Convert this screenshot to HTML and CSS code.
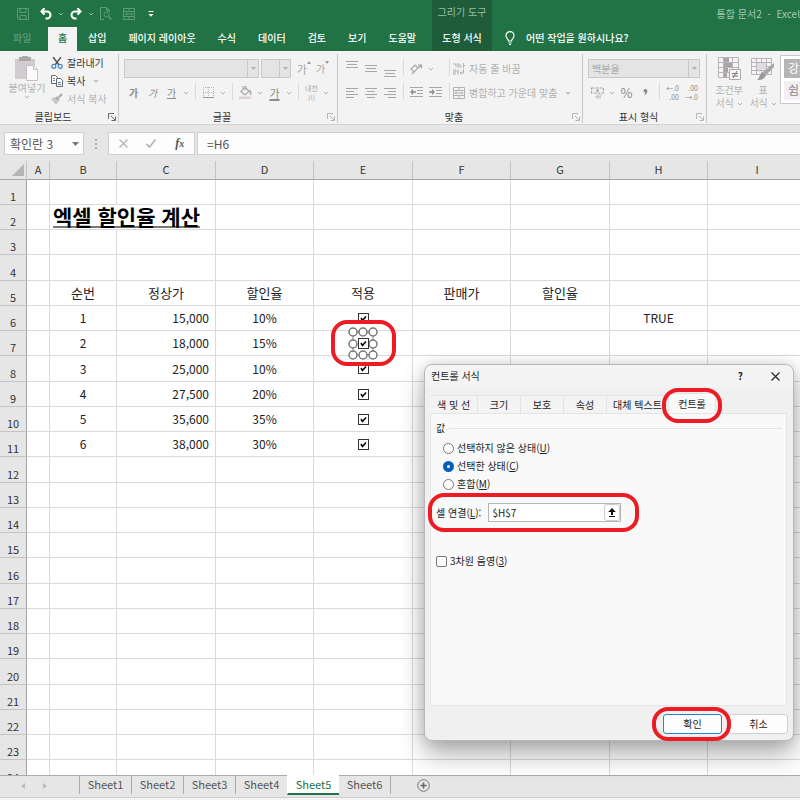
FILE: index.html
```html
<!DOCTYPE html>
<html lang="ko">
<head>
  <meta charset="UTF-8" />
  <meta name="viewport" content="width=device-width, initial-scale=1.0"/>
  <title>통합 문서2 - Excel</title>
  <link rel="stylesheet" href="styles.css">
</head>
<body>

  <svg class="defs" width="0" height="0">
    <symbol id="chev" viewBox="0 0 6 6"><path d="M1 2l2 2 2-2" fill="none" stroke="currentColor"/></symbol>
    <symbol id="launch" viewBox="0 0 8 8"><path d="M.5 6V.5H6M3 3l4 4M7.500 3.500v4h-4" fill="none" stroke="currentColor"/></symbol>
  </svg>

  <header class="top">
    <div class="top-left">
      <div class="qat">
        <button class="dim" aria-label="저장"><svg width="12" height="12" viewBox="0 0 12 12"><path d="M.5.5h11v11H2L.5 10zM3 .5v4h6v-4M3 11.500v-4h6v4" fill="none" stroke="currentColor"/></svg></button>
        <button aria-label="실행 취소"><svg width="12" height="12" viewBox="0 0 12 12"><path d="M4.500 0L1.500 3.500l3 3M1.500 3.500H7a3.400 3.400 0 0 1 0 7H5.500" fill="none" stroke="currentColor" stroke-width="2"/></svg></button>
        <svg class="mini" width="6" height="6"><use href="#chev"/></svg>
        <button aria-label="다시 실행"><svg width="12" height="12" viewBox="0 0 12 12"><path d="M7.500 0l3 3.500-3 3M10.500 3.500H5a3.400 3.400 0 0 0 0 7h1.500" fill="none" stroke="currentColor" stroke-width="2"/></svg></button>
        <svg class="mini" width="6" height="6"><use href="#chev"/></svg>
        <button class="dim" aria-label="인쇄 미리 보기"><svg width="12" height="13" viewBox="0 0 12 13"><path d="M4 12.500H.5V.5h6l3 3V5M6.500.5v3h3" fill="none" stroke="currentColor"/><circle cx="6.500" cy="7.500" r="2.500" fill="none" stroke="currentColor"/><path d="M8.500 9.500l3 3" stroke="currentColor" stroke-width="1.500"/></svg></button>
        <button class="dim" aria-label="표"><svg width="12" height="12" viewBox="0 0 12 12"><path d="M.5.5h11v11H.5zM.5 3.500h11M.5 8.500h11M6 .5v3M6 8.500v3M2.500 6h7M4 4.800L2.500 6 4 7.200M8 4.800L9.500 6 8 7.200" fill="none" stroke="currentColor"/></svg></button>
        <button aria-label="빠른 실행 도구 모음 사용자 지정"><svg width="6" height="6" viewBox="0 0 6 6"><path d="M.5.5h5" stroke="currentColor"/><path d="M.5 3h5L3 5.800z" fill="currentColor"/></svg></button>
      </div>
      <nav class="tabs">
        <a href="#" class="tab file">파일</a>
        <a href="#" class="tab active">홈</a>
        <a href="#" class="tab">삽입</a>
        <a href="#" class="tab">페이지 레이아웃</a>
        <a href="#" class="tab">수식</a>
        <a href="#" class="tab">데이터</a>
        <a href="#" class="tab">검토</a>
        <a href="#" class="tab">보기</a>
        <a href="#" class="tab">도움말</a>
      </nav>
    </div>
    <div class="top-context">
      <span class="context-title">그리기 도구</span>
      <a href="#" class="tab">도형 서식</a>
    </div>
    <div class="top-right">
      <span class="doc-title">통합 문서2&nbsp; -&nbsp; Excel</span>
      <a href="#" class="tell-me"><svg width="10" height="14" viewBox="0 0 10 14"><path d="M3.500 10C3.500 8 1 7.500 1 4.600a4 4 0 0 1 8 0C9 7.500 6.500 8 6.500 10zM3.500 12h3M4 13.500h2" fill="none" stroke="currentColor" stroke-width="1.200"/></svg>어떤 작업을 원하시나요?</a>
    </div>
  </header>

  <section class="ribbon">
    <div class="group clipboard">
      <div class="group-body">
        <button class="big paste">
          <svg width="24" height="25" viewBox="0 0 24 25"><path d="M0 3h20v20H0z" fill="#d2ccd1"/><path d="M4 1h3a3 2 0 0 1 6 0h3v4H4z" fill="#a8a8a8"/><path d="M11.500 9.500h7l4 4v11h-11z" fill="#fafafa" stroke="#c6bfc6"/><path d="M18.500 9.500v4h4" fill="none" stroke="#c6bfc6"/></svg>
          붙여넣기
          <svg width="6" height="6"><use href="#chev"/></svg>
        </button>
        <div class="stack">
          <button class="on"><svg width="12" height="12" viewBox="0 0 12 12"><path d="M2 0l6 8M10 0L4 8" stroke="#555" stroke-width="1.500"/><circle cx="2.800" cy="9.300" r="2" fill="none" stroke="#4a86c5" stroke-width="1.200"/><circle cx="9.200" cy="9.300" r="2" fill="none" stroke="#4a86c5" stroke-width="1.200"/></svg>잘라내기</button>
          <button class="on"><svg width="12" height="12" viewBox="0 0 12 12"><path d="M.5.5h4l2 2v6h-6z" fill="#fff" stroke="#666"/><path d="M5.500 3.500h4l2 2v6h-6z" fill="#fff" stroke="#666"/><path d="M2 3.500h2M2 5.500h2M7 7.500h3M7 9.500h3" stroke="#4a86c5"/></svg>복사<svg class="after" width="6" height="6"><use href="#chev"/></svg></button>
          <button><svg width="12" height="12" viewBox="0 0 12 12"><path d="M0 6l4-2 4 4-3 4z" fill="#c8c8c8"/><path d="M5 4l3 3M7.500 4.500L11 1" stroke="#aaa" stroke-width="2"/></svg>서식 복사</button>
        </div>
      </div>
      <div class="group-label">클립보드<svg class="dark" width="8" height="8"><use href="#launch"/></svg></div>
    </div>

    <div class="group font">
      <div class="rows">
        <div class="row">
          <select class="combo font-name" aria-label="글꼴" disabled><option></option></select>
          <select class="combo font-size" aria-label="글꼴 크기" disabled><option></option></select>
          <button class="tool grow">가<svg width="4" height="3" viewBox="0 0 4 3"><path d="M0 3h4L2 0z" fill="#999"/></svg></button>
          <button class="tool shrink">가<svg width="4" height="3" viewBox="0 0 4 3"><path d="M0 0h4L2 3z" fill="#999"/></svg></button>
        </div>
        <div class="row">
          <button class="tool bold">가</button>
          <button class="tool italic">가</button>
          <button class="tool underline">가</button>
          <button class="drop" aria-label="밑줄"><svg width="6" height="6"><use href="#chev"/></svg></button>
          <i class="sep"></i>
          <button class="tool" aria-label="테두리"><svg width="11" height="11" viewBox="0 0 11 11"><path d="M.5 0v10M5.500 0v10M10.500 0v10M0 .5h11M0 5.500h11" stroke="#c0b4c0" stroke-dasharray="1 1"/><path d="M0 10.500h11" stroke="#999"/></svg></button>
          <button class="drop" aria-label="테두리 옵션"><svg width="6" height="6"><use href="#chev"/></svg></button>
          <i class="sep"></i>
          <button class="tool" aria-label="채우기 색"><svg width="13" height="13" viewBox="0 0 13 13"><path d="M2 5.500L6.500 1.500l3.500 4L6 9zM4 4V1.500a1.500 1.500 0 0 1 3 0V4" fill="none" stroke="#aaa" stroke-width="1.200"/><path d="M10 4c2 1 2 3 1.500 5" fill="none" stroke="#aaa" stroke-width="1.500"/><path d="M0 10.500h12v2.500H0z" fill="#dcd2dc"/></svg></button>
          <button class="drop" aria-label="채우기 옵션"><svg width="6" height="6"><use href="#chev"/></svg></button>
          <button class="tool color">가</button>
          <button class="drop" aria-label="글꼴 색 옵션"><svg width="6" height="6"><use href="#chev"/></svg></button>
          <i class="sep"></i>
          <button class="tool ruby"><span>내천</span><span>川</span></button>
          <button class="drop" aria-label="윗주"><svg width="6" height="6"><use href="#chev"/></svg></button>
        </div>
      </div>
      <div class="group-label">글꼴<svg width="8" height="8"><use href="#launch"/></svg></div>
    </div>

    <div class="group align">
      <div class="align-grid">
        <div class="row">
          <button class="tool high" aria-label="위쪽 맞춤"><svg width="12" height="8" viewBox="0 0 12 8"><path d="M0 .5h12M1 3.500h10M0 6.500h12" stroke="currentColor"/></svg></button>
          <button class="tool" aria-label="가운데 맞춤"><svg width="12" height="8" viewBox="0 0 12 8"><path d="M0 .5h12M1 3.500h10M0 6.500h12" stroke="currentColor"/></svg></button>
          <button class="tool low" aria-label="아래쪽 맞춤"><svg width="12" height="8" viewBox="0 0 12 8"><path d="M0 .5h12M1 3.500h10M0 6.500h12" stroke="currentColor"/></svg></button>
        </div>
        <i class="sep"></i>
        <div class="row">
          <button class="tool" aria-label="방향"><svg width="13" height="13" viewBox="0 0 13 13"><path d="M1 7l4-4 3 3-4 4zM2 12l9-9M8 3h3.500v3.500" fill="none" stroke="currentColor" stroke-width="1.200"/></svg></button>
          <button class="drop" aria-label="방향 옵션"><svg width="6" height="6"><use href="#chev"/></svg></button>
        </div>
        <i class="sep"></i>
        <button class="wide"><svg width="12" height="12" viewBox="0 0 12 12"><path d="M0 1h3v3M5 0v5M5 2.500h1M7 1v3h2M10.500 0v5M10.500 2.500H12M0 7h3v2H0v2h3M5 6.500v5M5 9h1M10.500 6v4H7M8.500 8.500L7 10l1.500 1.500" fill="none" stroke="currentColor"/></svg>자동 줄 바꿈</button>
        <div class="row">
          <button class="tool" aria-label="왼쪽 맞춤"><svg width="12" height="10" viewBox="0 0 12 10"><path d="M0 .5h12M0 3.500h8M0 6.500h12M0 9.500h8" stroke="currentColor"/></svg></button>
          <button class="tool" aria-label="가로 가운데"><svg width="12" height="10" viewBox="0 0 12 10"><path d="M0 .5h12M2 3.500h8M0 6.500h12M2 9.500h8" stroke="currentColor"/></svg></button>
          <button class="tool" aria-label="오른쪽 맞춤"><svg width="12" height="10" viewBox="0 0 12 10"><path d="M0 .5h12M4 3.500h8M0 6.500h12M4 9.500h8" stroke="currentColor"/></svg></button>
        </div>
        <i class="sep"></i>
        <div class="row">
          <button class="tool" aria-label="내어쓰기"><svg width="13" height="11" viewBox="0 0 13 11"><path d="M0 .5h13M7 3.500h6M7 6.500h6M0 9.500h13" stroke="currentColor"/><path d="M6 5H1M3 2.800L1 5l2 2.200" fill="none" stroke="#8a8a8a" stroke-width="1.300"/></svg></button>
          <button class="tool" aria-label="들여쓰기"><svg width="13" height="11" viewBox="0 0 13 11"><path d="M0 .5h13M7 3.500h6M7 6.500h6M0 9.500h13" stroke="currentColor"/><path d="M0 5h5M3 2.800L5 5 3 7.200" fill="none" stroke="#8a8a8a" stroke-width="1.300"/></svg></button>
        </div>
        <i class="sep"></i>
        <button class="wide"><svg width="12" height="12" viewBox="0 0 12 12"><path d="M.5.5h11v11H.5zM.5 3.500h11M.5 8.500h11M6 .5v3M6 8.500v3" fill="none" stroke="currentColor"/><path d="M2 6h8M3.500 4.800L2 6l1.500 1.200M8.500 4.800L10 6 8.500 7.200" fill="none" stroke="#b9a5b5"/></svg>병합하고 가운데 맞춤<svg class="after" width="6" height="6"><use href="#chev"/></svg></button>
      </div>
      <div class="group-label">맞춤<svg width="8" height="8"><use href="#launch"/></svg></div>
    </div>

    <div class="group number">
      <div class="rows">
        <div class="row">
          <select class="combo format" aria-label="표시 형식" disabled><option>백분율</option></select>
        </div>
        <div class="row">
          <button class="tool" aria-label="회계 표시 형식"><svg width="13" height="12" viewBox="0 0 13 12"><path d="M.5 1h12v5H.5z" fill="none" stroke="currentColor" stroke-width="1.200" stroke-dasharray="3 1"/><circle cx="6.500" cy="3.500" r="1.300" fill="#999"/><path d="M5 8h6M4 9.500h6M5 11h5" stroke="#ccc1cc"/></svg></button>
          <button class="drop" aria-label="회계 옵션"><svg width="6" height="6"><use href="#chev"/></svg></button>
          <button class="tool percent">%</button>
          <button class="tool comma" aria-label="쉼표 스타일"><svg width="5" height="7" viewBox="0 0 5 7"><path d="M2.500 0a1.800 1.800 0 0 1 1.800 2C4.300 4 3 6 1 6.500 2 5.500 2.400 4.500 2.300 3.600A1.800 1.800 0 0 1 2.500 0z" fill="#888"/></svg></button>
          <i class="sep"></i>
          <button class="tool decimal"><span>←.0</span><span>.00</span></button>
          <button class="tool decimal"><span>.00</span><span>→.0</span></button>
        </div>
      </div>
      <div class="group-label">표시 형식<svg width="8" height="8"><use href="#launch"/></svg></div>
    </div>

    <div class="group styles">
      <button class="big">
        <svg width="24" height="25" viewBox="0 0 24 25"><path d="M1.500 1.500h20v20h-20zM1.500 6.500h20M1.500 11.500h20M1.500 16.500h20M6.500 1v20M15.500 1v20" fill="none" stroke="#bcb2bc"/><path d="M7 2h5v4H7zM7 7h8v4H7zM7 12h4v4H7zM7 17h3v4H7z" fill="#a6a6a6"/><path d="M12.500 13.500h11v10h-11z" fill="#f8f4f8" stroke="#aaa"/><path d="M15 17.500h6M15 20h6M20 15l-4 7" stroke="#777"/></svg>
        <span>조건부<br>서식 <svg width="6" height="6"><use href="#chev"/></svg></span>
      </button>
      <button class="big">
        <svg width="24" height="25" viewBox="0 0 24 25"><path d="M.5 2.500h20v16H.5zM.5 6.500h20M.5 10.500h20M.5 14.500h20M5.500 2v16M10.500 2v16M15.500 2v16" fill="none" stroke="#bcb2bc"/><path d="M6 7h9v7H6z" fill="#ddd"/><path d="M23 7v4l-8 8-3-3z" fill="#a6a6a6"/><path d="M12 16l3 3c-1 4-5 5-9 5 3-2 2-6 6-8z" fill="#9a9a9a"/></svg>
        <span>표<br>서식 <svg width="6" height="6"><use href="#chev"/></svg></span>
      </button>
      <div class="gallery"><span class="strong">강조색</span><span class="plain">쉼표</span></div>
    </div>
  </section>

  <section class="formula-bar">
    <label class="name-box"><input type="text" value="확인란 3" aria-label="이름 상자"><svg width="7" height="4" viewBox="0 0 7 4"><path d="M0 0h7L3.500 4z" fill="#777"/></svg></label>
    <span class="dots"><svg width="2" height="10" viewBox="0 0 2 10"><path d="M0 0h2v2H0zM0 4h2v2H0zM0 8h2v2H0z" fill="#b0b0b0"/></svg></span>
    <div class="fx-box">
      <button aria-label="취소"><svg width="9" height="9" viewBox="0 0 9 9"><path d="M.5.5l8 8M8.500.5l-8 8" stroke="#b4b4b4" stroke-width="1.400"/></svg></button>
      <button aria-label="입력"><svg width="10" height="9" viewBox="0 0 10 9"><path d="M.5 5l3 3 6-7.500" fill="none" stroke="#b4b4b4" stroke-width="1.600"/></svg></button>
      <button class="fx">f<small>x</small></button>
    </div>
    <input class="formula" type="text" value="=H6" aria-label="수식">
  </section>

  <main class="sheet">
    <table class="grid">
      <colgroup><col class="c-num"><col class="c-a"><col class="c-b"><col class="c-odd"><col class="c-even"><col class="c-odd"><col class="c-even"><col class="c-odd"><col class="c-even"><col class="c-odd"><col></colgroup>
      <thead>
        <tr><th class="corner"><svg width="12" height="12" viewBox="0 0 12 12"><path d="M12 0v12H0z" fill="#b4b4b4"/></svg></th><th>A</th><th>B</th><th>C</th><th>D</th><th>E</th><th>F</th><th>G</th><th>H</th><th>I</th><th></th></tr>
      </thead>
      <tbody>
        <tr><th>1</th><td></td><td></td><td></td><td></td><td></td><td></td><td></td><td></td><td></td><td></td></tr>
        <tr><th>2</th><td></td><td colspan="2" class="title">엑셀 할인율 계산</td><td></td><td></td><td></td><td></td><td></td><td></td><td></td></tr>
        <tr><th>3</th><td></td><td></td><td></td><td></td><td></td><td></td><td></td><td></td><td></td><td></td></tr>
        <tr><th>4</th><td></td><td></td><td></td><td></td><td></td><td></td><td></td><td></td><td></td><td></td></tr>
        <tr class="heads"><th>5</th><td></td><td>순번</td><td>정상가</td><td>할인율</td><td>적용</td><td>판매가</td><td>할인율</td><td></td><td></td><td></td></tr>
        <tr><th>6</th><td></td><td>1</td><td class="price">15,000</td><td>10%</td><td><input type="checkbox" aria-label="적용 1" checked></td><td></td><td></td><td>TRUE</td><td></td><td></td></tr>
        <tr><th>7</th><td></td><td>2</td><td class="price">18,000</td><td>15%</td><td class="selected"><input type="checkbox" aria-label="적용 2" checked>
          <svg class="handles" width="32" height="34" viewBox="0 0 32 34"><path d="M6 5h20v23H6z" fill="none" stroke="#888"/><g fill="#fff" stroke="#777" stroke-width="1.500"><circle cx="6" cy="5" r="4"/><circle cx="16" cy="5" r="4"/><circle cx="26" cy="5" r="4"/><circle cx="6" cy="17" r="4"/><circle cx="26" cy="17" r="4"/><circle cx="6" cy="28" r="4"/><circle cx="16" cy="28" r="4"/><circle cx="26" cy="28" r="4"/></g></svg>
          <span class="ring"></span></td><td></td><td></td><td></td><td></td><td></td></tr>
        <tr><th>8</th><td></td><td>3</td><td class="price">25,000</td><td>10%</td><td><input type="checkbox" aria-label="적용 3" checked></td><td></td><td></td><td></td><td></td><td></td></tr>
        <tr><th>9</th><td></td><td>4</td><td class="price">27,500</td><td>20%</td><td><input type="checkbox" aria-label="적용 4" checked></td><td></td><td></td><td></td><td></td><td></td></tr>
        <tr><th>10</th><td></td><td>5</td><td class="price">35,600</td><td>35%</td><td><input type="checkbox" aria-label="적용 5" checked></td><td></td><td></td><td></td><td></td><td></td></tr>
        <tr><th>11</th><td></td><td>6</td><td class="price">38,000</td><td>30%</td><td><input type="checkbox" aria-label="적용 6" checked></td><td></td><td></td><td></td><td></td><td></td></tr>
        <tr><th>12</th><td></td><td></td><td></td><td></td><td></td><td></td><td></td><td></td><td></td><td></td></tr>
        <tr><th>13</th><td></td><td></td><td></td><td></td><td></td><td></td><td></td><td></td><td></td><td></td></tr>
        <tr><th>14</th><td></td><td></td><td></td><td></td><td></td><td></td><td></td><td></td><td></td><td></td></tr>
        <tr><th>15</th><td></td><td></td><td></td><td></td><td></td><td></td><td></td><td></td><td></td><td></td></tr>
        <tr><th>16</th><td></td><td></td><td></td><td></td><td></td><td></td><td></td><td></td><td></td><td></td></tr>
        <tr><th>17</th><td></td><td></td><td></td><td></td><td></td><td></td><td></td><td></td><td></td><td></td></tr>
        <tr><th>18</th><td></td><td></td><td></td><td></td><td></td><td></td><td></td><td></td><td></td><td></td></tr>
        <tr><th>19</th><td></td><td></td><td></td><td></td><td></td><td></td><td></td><td></td><td></td><td></td></tr>
        <tr><th>20</th><td></td><td></td><td></td><td></td><td></td><td></td><td></td><td></td><td></td><td></td></tr>
        <tr><th>21</th><td></td><td></td><td></td><td></td><td></td><td></td><td></td><td></td><td></td><td></td></tr>
        <tr><th>22</th><td></td><td></td><td></td><td></td><td></td><td></td><td></td><td></td><td></td><td></td></tr>
        <tr><th>23</th><td></td><td></td><td></td><td></td><td></td><td></td><td></td><td></td><td></td><td></td></tr>
        <tr><th>24</th><td></td><td></td><td></td><td></td><td></td><td></td><td></td><td></td><td></td><td></td></tr>
      </tbody>
    </table>
  </main>

  <footer class="sheet-tabs">
    <div class="nav-arrows">
      <button aria-label="이전 시트"><svg width="4" height="6" viewBox="0 0 4 6"><path d="M4 0v6L0 3z" fill="#bbb"/></svg></button>
      <button aria-label="다음 시트"><svg width="4" height="6" viewBox="0 0 4 6"><path d="M0 0v6l4-3z" fill="#bbb"/></svg></button>
    </div>
    <a href="#">Sheet1</a>
    <a href="#">Sheet2</a>
    <a href="#">Sheet3</a>
    <a href="#">Sheet4</a>
    <a href="#" class="active">Sheet5</a>
    <a href="#" class="last">Sheet6</a>
    <button class="add" aria-label="새 시트"><svg width="13" height="13" viewBox="0 0 13 13"><circle cx="6.500" cy="6.500" r="5.800" fill="none" stroke="#777"/><path d="M6.500 3.500v6M3.500 6.500h6" stroke="#666" stroke-width="1.600"/></svg></button>
  </footer>
  <div class="status"></div>

  <div class="dialog" role="dialog" aria-labelledby="dlg-title">
    <div class="dlg-head">
      <span id="dlg-title">컨트롤 서식</span>
      <button class="help">?</button>
      <button aria-label="닫기"><svg width="9" height="9" viewBox="0 0 9 9"><path d="M.5.5l8 8M8.500.5l-8 8" stroke="#222" stroke-width="1.100"/></svg></button>
    </div>
    <div class="dlg-tabs">
      <button class="w-lg">색 및 선</button>
      <button>크기</button>
      <button>보호</button>
      <button>속성</button>
      <button class="w-xl">대체 텍스트</button>
      <button class="current">컨트롤<span class="ring"></span></button>
    </div>
    <div class="dlg-pane">
      <fieldset>
        <legend>값</legend>
        <label><input type="radio" name="state"><span>선택하지 않은 상태(<u>U</u>)</span></label>
        <label><input type="radio" name="state" checked><span>선택한 상태(<u>C</u>)</span></label>
        <label><input type="radio" name="state"><span>혼합(<u>M</u>)</span></label>
      </fieldset>
      <div class="link-row">
        <label for="cell-link">셀 연결(<u>L</u>):</label>
        <div class="ref-box">
          <input id="cell-link" type="text" value="$H$7">
          <button aria-label="범위 선택"><svg width="8" height="9" viewBox="0 0 8 9"><path d="M4 0l3.800 4H5v3H3V4H.2zM1 8h6v1H1z" fill="#111"/></svg></button>
        </div>
        <span class="ring"></span>
      </div>
      <label class="shade"><input type="checkbox"><span>3차원 음영(<u>3</u>)</span></label>
    </div>
    <div class="dlg-foot">
      <button class="ok">확인<span class="ring"></span></button>
      <button>취소</button>
    </div>
  </div>

</body>
</html>
```
FILE: styles.css
```css
* {
  box-sizing: border-box;
}
body {
  margin: 0;
  height: 100vh;
  display: flex;
  flex-direction: column;
  overflow: hidden;
  position: relative;
  font-family: "Noto Sans CJK KR", "Open Sans", sans-serif;
  font-size: 10px;
  line-height: 14px;
  color: #333;
  background: #f3f3f3;
}
button, input, select {
  font: inherit;
  color: inherit;
  margin: 0;
  padding: 0;
  border: none;
  background: none;
}
button {
  display: flex;
  align-items: center;
  justify-content: center;
  white-space: nowrap;
}
a {
  color: inherit;
  text-decoration: none;
}
svg {
  flex: none;
}
.defs {
  position: absolute;
}

/* title bar and tabs */
.top {
  flex: none;
  display: flex;
  height: 51px;
  background: #217346;
  color: #fff;
  white-space: nowrap;
}
.top-left {
  flex: 0 0 432px;
}
.qat {
  display: flex;
  align-items: center;
  height: 27px;
  padding-left: 17px;
  gap: 11px;
}
.qat .dim {
  color: #5c9c78;
}
.qat .mini {
  margin: 0 -5px;
  color: #8fbca2;
}
.qat button:last-child {
  margin-left: 2px;
}
.tabs {
  display: flex;
  height: 24px;
}
.tab {
  padding: 0 11px;
  line-height: 22px;
  font-weight: 500;
}
.tab.file {
  width: 48px;
  padding: 0 13px;
  color: #5c9c78;
}
.tab.active {
  width: 29px;
  padding: 0 10px;
  background: #f3f3f3;
  color: #217346;
}
.top-context {
  display: flex;
  flex-direction: column;
  align-items: center;
  width: 60px;
  background: #1e5c3a;
}
.context-title {
  height: 27px;
  line-height: 24px;
  color: #96bfa7;
}
.top-right {
  flex: 1;
  display: flex;
  flex-direction: column;
}
.doc-title {
  height: 27px;
  line-height: 27px;
  align-self: flex-end;
  color: #a6c9b5;
}
.tell-me {
  display: flex;
  align-items: center;
  gap: 11px;
  height: 22px;
  padding-left: 13px;
  font-weight: 500;
}

/* ribbon */
.ribbon {
  flex: none;
  display: flex;
  height: 74px;
  overflow: hidden;
  border-bottom: 1px solid #d2d2d2;
  color: #b1b1b1;
}
.group {
  flex: none;
  display: flex;
  flex-direction: column;
  justify-content: space-between;
  margin: 3px 0 1px;
  border-right: 1px solid #c8c8c8;
}
.clipboard {
  width: 119px;
}
.font {
  width: 219px;
}
.align {
  width: 245px;
}
.number {
  width: 124px;
}
.group-label {
  display: flex;
  align-items: center;
  justify-content: center;
  height: 13px;
  padding-right: 2px;
  color: #333;
}
.group-label::before {
  content: "";
  width: 8px;
  margin: 0 auto 0 -10px;
}
.group-label svg {
  margin-left: auto;
  color: #b5b5b5;
}
.group-label .dark {
  color: #666;
}
.group-body {
  display: flex;
  padding-left: 8px;
}
.big {
  flex-direction: column;
  justify-content: flex-start;
  line-height: 13px;
  padding-top: 2px;
}
.paste {
  width: 38px;
}
.stack {
  padding-left: 5px;
}
.stack button {
  height: 18px;
  gap: 4px;
}
.stack .on {
  color: #333;
}
.after {
  margin-left: 4px;
  color: #999;
}
.rows {
  display: flex;
  flex-direction: column;
  gap: 5px;
  padding: 5px 5px 0;
}
.row {
  display: flex;
  height: 19px;
}
.tool {
  width: 19px;
  color: #a6a6a6;
}
.drop {
  width: 10px;
}
.sep {
  width: 8px;
  height: 17px;
  background: linear-gradient(#dadada, #dadada) center / 1px 100% no-repeat;
}
.combo {
  appearance: none;
  height: 19px;
  padding: 0 3px;
  border: 1px solid #c9c9c9;
  background: url("data:image/svg+xml,%3Csvg xmlns='http://www.w3.org/2000/svg' width='11' height='17'%3E%3Cpath d='M.5 0v17' stroke='%23c9c9c9'/%3E%3Cpath d='M4 7h5L6.500 10z' fill='%23b0b0b0'/%3E%3C/svg%3E") right center no-repeat #e4e4e4;
  color: #aaa;
  opacity: 1;
}
.font-name {
  width: 136px;
  margin-right: 2px;
}
.font-size {
  width: 31px;
  margin-right: 3px;
}
.format {
  width: 112px;
}
.grow svg, .shrink svg {
  align-self: flex-start;
  margin-top: 2px;
}
.grow {
  font-size: 11px;
}
.bold {
  font-weight: 700;
}
.italic {
  font-style: italic;
}
.bold, .italic, .underline, .color {
  color: #8c8c8c;
}
.underline {
  text-decoration: underline;
}
.color {
  text-decoration: underline 2px;
  font-size: 11px;
}
.ruby {
  flex-direction: column;
  font-size: 7px;
  line-height: 9px;
}
.percent {
  font-size: 13px;
  color: #8c8c8c;
}
.decimal {
  flex-direction: column;
  font-size: 7px;
  line-height: 9px;
  align-items: flex-end;
  padding-right: 3px;
  color: #8c8c8c;
}
.align-grid {
  display: grid;
  grid-template-columns: 57px 8px 38px 8px auto;
  gap: 5px 0;
  padding: 5px 0 0 4px;
}
.high {
  align-items: flex-start;
  padding-top: 2px;
}
.low {
  align-items: flex-end;
}
.wide {
  justify-content: flex-start;
  gap: 4px;
}
.styles {
  width: auto;
  flex: 1;
  flex-direction: row;
  justify-content: flex-start;
  border: none;
  padding-left: 5px;
}
.styles .big {
  width: 34px;
}
.styles .big > svg {
  margin-bottom: 2px;
}
.gallery {
  flex: 1 0 60px;
  display: flex;
  flex-direction: column;
  gap: 3px;
  height: 49px;
  margin: 1px -40px 0 0;
  padding: 3px;
  border: 1px solid #c9c9c9;
  background: #fff;
  font-size: 12px;
  line-height: 18px;
}
.gallery span {
  padding-left: 4px;
  height: 19px;
}
.strong {
  background: #b5b5b5;
  color: #fff;
}
.plain {
  background: #f4eff4;
  color: #888;
}

/* formula bar */
.formula-bar {
  flex: none;
  display: flex;
  height: 36px;
  padding: 7px 0 6px 4px;
  background: #e6e6e6;
  font-size: 12px;
  color: #555;
}
.name-box, .fx-box, .formula {
  border: 1px solid #cfcfcf;
  background: #fdfdfd;
}
.name-box {
  display: flex;
  align-items: center;
  width: 80px;
  padding: 0 4px 0 5px;
}
.name-box input {
  flex: 1;
  min-width: 0;
}
.dots {
  display: flex;
  align-items: center;
  justify-content: center;
  width: 24px;
}
.fx-box {
  display: flex;
  width: 87px;
  margin-right: 2px;
}
.fx-box button {
  flex: 1;
}
.fx {
  font: italic 700 12px "Liberation Serif", serif;
}
.fx small {
  font-size: 10px;
}
.formula {
  flex: 1;
  min-width: 0;
  padding-left: 9px;
  border-right: none;
}

/* worksheet */
.sheet {
  flex: 1;
  min-height: 0;
  overflow: hidden;
  background: #fff;
}
.grid {
  width: 100%;
  min-width: 860px;
  table-layout: fixed;
  border-collapse: separate;
  border-spacing: 0;
  font-size: 12px;
  line-height: 16px;
}
.c-num { width: 27px; }
.c-a { width: 23px; }
.c-b { width: 67px; }
.c-odd { width: 99px; }
.c-even { width: 98px; }
.grid th {
  padding: 0;
  border-right: 1px solid #c4c4c4;
  border-bottom: 1px solid #c4c4c4;
  background: #e6e6e6;
  font-size: 11px;
  line-height: 14px;
  font-weight: 400;
}
.grid thead th {
  height: 19px;
  padding-bottom: 2px;
  border-bottom-color: #a5a5a5;
}
.grid .corner {
  padding: 0 2px 0 0;
}
.corner svg {
  display: block;
  margin-left: auto;
}
.grid tbody tr {
  height: 25px;
}
.grid tbody tr:nth-child(4n) {
  height: 26px;
}
.grid tbody th {
  vertical-align: bottom;
  padding-bottom: 1px;
  border-right-color: #a5a5a5;
}
.grid td {
  padding: 0;
  border-right: 1px solid #dadada;
  border-bottom: 1px solid #dadada;
  text-align: center;
  color: #222;
}
.grid .price {
  text-align: right;
  padding-right: 6px;
}
.grid .title {
  padding: 0 0 2px 3px;
  font-size: 21px;
  line-height: 20px;
  font-weight: 700;
  text-align: left;
  white-space: nowrap;
  color: #000;
  text-decoration: underline #777 2px;
}
.heads td {
  font-size: 13px;
}
.grid input {
  appearance: none;
  display: block;
  width: 11px;
  height: 11px;
  margin: 0 auto;
  border: 1px solid #333;
  background: #fff url("data:image/svg+xml,%3Csvg xmlns='http://www.w3.org/2000/svg' width='9' height='9'%3E%3Cpath d='M2 4l1.500 2.500L7 2.500' fill='none' stroke='%23000' stroke-width='1.500'/%3E%3C/svg%3E") center no-repeat;
}
.grid .selected {
  position: relative;
}
.selected input {
  position: relative;
  z-index: 1;
}
.handles {
  position: absolute;
  left: 33px;
  top: -4px;
}
.ring {
  position: absolute;
  z-index: 2;
  border: 4px solid #ed1c24;
  border-radius: 16px;
  pointer-events: none;
}
.selected .ring {
  left: 17px;
  top: -11px;
  width: 65px;
  height: 46px;
}

/* sheet tabs */
.sheet-tabs {
  flex: none;
  display: flex;
  height: 23px;
  border-top: 1px solid #ababab;
  border-bottom: 1px solid #d0d0d0;
  background: #e6e6e6;
  color: #555;
  font-size: 11px;
}
.nav-arrows {
  display: flex;
  align-items: center;
  gap: 18px;
  width: 79px;
  padding: 0 0 2px 21px;
}
.sheet-tabs a {
  width: 52px;
  height: 18px;
  line-height: 17px;
  text-align: center;
  border-left: 1px solid #ababab;
}
.sheet-tabs .active {
  margin-top: -1px;
  height: 20px;
  line-height: 18px;
  border-left-color: #fff;
  border-bottom: 2px solid #217346;
  background: #fff;
  color: #217346;
}
.sheet-tabs .last {
  border-left: none;
  border-right: 1px solid #ababab;
}
.sheet-tabs .add {
  margin-left: 26px;
  padding-bottom: 2px;
}
.status {
  flex: none;
  height: 2px;
}

/* format control dialog */
.dialog {
  position: absolute;
  left: 424px;
  top: 364px;
  width: 370px;
  height: 377px;
  display: flex;
  flex-direction: column;
  border: 1px solid #b8b8b8;
  border-radius: 8px;
  background: #f0f0f0;
  box-shadow: 0 14px 26px rgba(0, 0, 0, 0.3), 0 0 14px rgba(0, 0, 0, 0.15);
  color: #222;
}
.dlg-head {
  display: flex;
  align-items: center;
  height: 22px;
  padding: 0 13px 0 6px;
  gap: 28px;
  border-radius: 8px 8px 0 0;
  background: #f4f4f4;
}
.dlg-head span {
  flex: 1;
}
.help {
  font-weight: 700;
}
.dlg-tabs {
  display: flex;
  align-items: flex-end;
  height: 26px;
  padding: 0 5px;
}
.dlg-tabs button {
  width: 43px;
  height: 18px;
  border: 1px solid #e3e3e3;
  border-width: 1px 1px 0 0;
  background: #f3f3f3;
}
.dlg-tabs .w-lg {
  width: 48px;
}
.dlg-tabs .w-xl {
  width: 62px;
}
.dlg-tabs .current {
  position: relative;
  width: 47px;
  height: 20px;
  background: #f9f9f9;
}
.current .ring {
  inset: -6px -7px -10px;
}
.dlg-pane {
  flex: 1;
  margin: 0 6px 0 5px;
  padding: 7px 4px 0 5px;
  border: 1px solid #e5e5e5;
  background: #f9f9f9;
}
fieldset {
  margin: 0;
  padding: 4px 0 0 7px;
  border: none;
  border-top: 1px solid #e3e3e3;
}
legend {
  margin-left: -7px;
  padding: 0 4px 0 0;
}
fieldset label, .shade {
  display: flex;
  align-items: center;
  gap: 3px;
  height: 18px;
}
.dlg-pane input[type="radio"],
.dlg-pane input[type="checkbox"] {
  appearance: none;
  width: 11px;
  height: 11px;
  border: 1px solid #777;
  background: #fff;
  border-radius: 50%;
}
.dlg-pane input[type="radio"]:checked {
  border: 4px solid #005fb8;
}
.dlg-pane input[type="checkbox"] {
  border-radius: 2px;
}
.link-row {
  position: relative;
  display: flex;
  align-items: center;
  gap: 7px;
  margin: 10px 0 30px;
}
.ref-box {
  display: flex;
  width: 133px;
  height: 19px;
  border: 1px solid #b5b5b5;
  background: #fff;
}
.ref-box input {
  flex: 1;
  min-width: 0;
  padding-left: 3px;
}
.ref-box button {
  width: 16px;
  border: 1px solid #ccc;
  border-radius: 3px;
}
.link-row .ring {
  left: -8px;
  top: -10px;
  width: 211px;
  height: 39px;
}
.dlg-foot {
  display: flex;
  justify-content: flex-end;
  gap: 7px;
  padding: 8px 5px 6px;
}
.dlg-foot button {
  width: 59px;
  height: 20px;
  border: 1px solid #d0d0d0;
  border-radius: 3px;
  background: #fdfdfd;
}
.dlg-foot .ok {
  position: relative;
  border-color: #2b83cf;
}
.ok .ring {
  inset: -8px -10px -8px -12px;
}
```
